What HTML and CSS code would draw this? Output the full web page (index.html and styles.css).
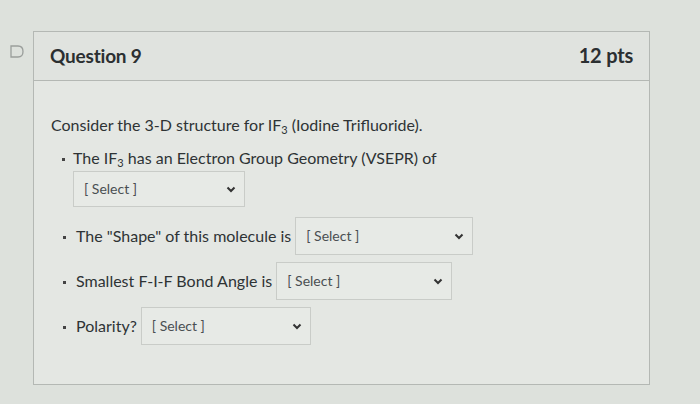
FILE: index.html
```html
<!DOCTYPE html>
<html>
<head>
<meta charset="utf-8">
<link rel="stylesheet" href="styles.css">
</head>
<body>
<div class="page">
  <div class="flag">
    <svg width="14" height="13" viewBox="0 0 14 13"><path d="M1 1 H8 Q13 1 13 6.5 Q13 12 8 12 H1 Z" fill="none" stroke="#9a9e9b" stroke-width="1.3"/></svg>
  </div>
  <div class="card">
    <div class="header">
      <span class="title">Question 9</span>
      <span class="pts">12 pts</span>
    </div>
    <div class="body">
      <p class="intro">Consider the 3-D structure for IF<sub>3</sub> (Iodine Trifluoride).</p>
      <ul class="list">
        <li class="item block">
          <span>The IF<sub>3</sub> has an Electron Group Geometry (VSEPR) of</span>
          <div class="select w1"><span>[ Select ]</span><svg class="chev" width="10" height="7" viewBox="0 0 10 7"><path d="M1.5 1.5 L5 5 L8.5 1.5" fill="none" stroke="#333" stroke-width="2"/></svg></div>
        </li>
        <li class="item">
          <span>The "Shape" of this molecule is</span>
          <div class="select w2"><span>[ Select ]</span><svg class="chev" width="10" height="7" viewBox="0 0 10 7"><path d="M1.5 1.5 L5 5 L8.5 1.5" fill="none" stroke="#333" stroke-width="2"/></svg></div>
        </li>
        <li class="item">
          <span>Smallest F-I-F Bond Angle is</span>
          <div class="select w3"><span>[ Select ]</span><svg class="chev" width="10" height="7" viewBox="0 0 10 7"><path d="M1.5 1.5 L5 5 L8.5 1.5" fill="none" stroke="#333" stroke-width="2"/></svg></div>
        </li>
        <li class="item">
          <span>Polarity?</span>
          <div class="select w4"><span>[ Select ]</span><svg class="chev" width="10" height="7" viewBox="0 0 10 7"><path d="M1.5 1.5 L5 5 L8.5 1.5" fill="none" stroke="#333" stroke-width="2"/></svg></div>
        </li>
      </ul>
    </div>
  </div>
</div>
</body>
</html>
```
FILE: styles.css
```css
html, body {
  margin: 0;
  padding: 0;
  background: #dde1dc;
  font-family: Lato, "Open Sans", sans-serif;
  color: #2e3335;
}
.page {
  display: flex;
  align-items: flex-start;
  width: 700px;
  height: 404px;
  overflow: hidden;
}
.flag {
  width: 33px;
  padding-top: 45px;
  padding-left: 10px;
  box-sizing: border-box;
}
.flag svg { display: block; }
.card {
  margin-top: 31px;
  width: 617px;
  height: 354px;
  border: 1px solid #b4b8b4;
  background: #e4e7e3;
  box-sizing: border-box;
}
.header {
  height: 46px;
  display: flex;
  align-items: center;
  justify-content: space-between;
  padding: 0 16px 2px 16px;
  background: #e0e3df;
  border-bottom: 1px solid #b4b8b4;
}
.title, .pts {
  font-size: 20px;
  font-weight: 700;
  color: #2b2f31;
  letter-spacing: -0.2px;
}
.title { font-size: 19px; }
.body {
  padding: 34px 0 0 17px;
}
.intro {
  margin: 0;
  font-size: 16px;
  line-height: 20px;
}
sub {
  font-size: 11px;
  vertical-align: -3px;
  line-height: 0;
}
.list {
  list-style: none;
  margin: 0;
  padding: 0;
}
.item {
  position: relative;
  display: flex;
  align-items: center;
  gap: 4px;
  padding-left: 25px;
  font-size: 16px;
  line-height: 20px;
  margin-top: 7px;
}
.item::before {
  content: "";
  position: absolute;
  left: 12px;
  top: 50%;
  width: 3px;
  height: 3px;
  background: #444;
}
.item.block {
  display: block;
  margin-top: 13px;
  padding-left: 22px;
}
.item.block::before { top: 10px; left: 11px; }
.select {
  display: flex;
  align-items: center;
  justify-content: space-between;
  height: 38px;
  box-sizing: border-box;
  border: 1px solid #c9ccc8;
  background: #e7eae6;
  padding: 0 8px 0 10px;
  font-size: 14px;
  color: #4a4f52;
}
.item.block .select { height: 36px; margin-top: 3px; margin-bottom: 10px; }
.w1 { width: 172px; }
.w2 { width: 178px; }
.w3 { width: 176px; }
.w4 { width: 170px; }
.chev { display: block; }
```
